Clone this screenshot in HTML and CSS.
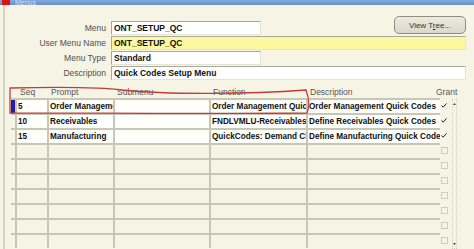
FILE: index.html
```html
<!DOCTYPE html>
<html>
<head>
<meta charset="utf-8">
<link rel="stylesheet" href="styles.css">
</head>
<body>
<div class="titlebar"><span class="ticon"></span><span class="ttext">Menus</span></div>
<div class="window">
  <div class="form">
    <div class="lbl">Menu</div>
    <div class="fld">ONT_SETUP_QC</div>
    <button class="btn">View T<u>r</u>ee...</button>
    <div class="lbl">User Menu Name</div>
    <div class="fld wide req">ONT_SETUP_QC</div>
    <div class="lbl">Menu Type</div>
    <div class="fld">Standard</div>
    <div class="lbl">Description</div>
    <div class="fld wide">Quick Codes Setup Menu</div>
  </div>

  <div class="table">
    <div class="hdr">
      <div></div>
      <div class="h seq">Seq</div>
      <div class="h">Prompt</div>
      <div class="h">Submenu</div>
      <div class="h">Function</div>
      <div class="h">Description</div>
      <div class="h grant">Grant</div>
    </div>
    <div class="body">
      <div class="rows">
        <div class="row"><div class="ind cur"></div><div class="c f">5</div><div class="c f">Order Management</div><div class="c f"></div><div class="c f">Order Management Quick Codes</div><div class="c f">Order Management Quick Codes</div><div class="g"><svg class="chk" viewBox="0 0 7 6"><path d="M0.5 3 L2.5 5 L6.5 0.5" /></svg></div></div>
        <div class="row"><div class="ind"></div><div class="c f">10</div><div class="c f">Receivables</div><div class="c f"></div><div class="c f">FNDLVMLU-Receivables</div><div class="c f">Define Receivables Quick Codes</div><div class="g"><svg class="chk" viewBox="0 0 7 6"><path d="M0.5 3 L2.5 5 L6.5 0.5" /></svg></div></div>
        <div class="row"><div class="ind"></div><div class="c f">15</div><div class="c f">Manufacturing</div><div class="c f"></div><div class="c f">QuickCodes: Demand Class</div><div class="c f">Define Manufacturing Quick Codes</div><div class="g"><svg class="chk" viewBox="0 0 7 6"><path d="M0.5 3 L2.5 5 L6.5 0.5" /></svg></div></div>
        <div class="row"><div class="ind"></div><div class="c"></div><div class="c"></div><div class="c"></div><div class="c"></div><div class="c"></div><div class="g"><span class="box"></span></div></div>
        <div class="row"><div class="ind"></div><div class="c"></div><div class="c"></div><div class="c"></div><div class="c"></div><div class="c"></div><div class="g"><span class="box"></span></div></div>
        <div class="row"><div class="ind"></div><div class="c"></div><div class="c"></div><div class="c"></div><div class="c"></div><div class="c"></div><div class="g"><span class="box"></span></div></div>
        <div class="row"><div class="ind"></div><div class="c"></div><div class="c"></div><div class="c"></div><div class="c"></div><div class="c"></div><div class="g"><span class="box"></span></div></div>
        <div class="row"><div class="ind"></div><div class="c"></div><div class="c"></div><div class="c"></div><div class="c"></div><div class="c"></div><div class="g"><span class="box"></span></div></div>
        <div class="row"><div class="ind"></div><div class="c"></div><div class="c"></div><div class="c"></div><div class="c"></div><div class="c"></div><div class="g"><span class="box"></span></div></div>
        <div class="row"><div class="ind"></div><div class="c"></div><div class="c"></div><div class="c"></div><div class="c"></div><div class="c"></div><div class="g"><span class="box"></span></div></div>
      </div>
      <div class="scroll">
        <svg class="arr" viewBox="0 0 4 3"><path d="M0 3 L2 0 L4 3 Z"/></svg>
        <svg class="arr" viewBox="0 0 4 3"><path d="M0 0 L2 3 L4 0 Z"/></svg>
      </div>
    </div>
  </div>
</div>
<svg class="note" viewBox="0 0 474 249" width="474" height="249">
  <path d="M10,88 C60,87 100,87 122,90 C170,95 250,94 306,90 C309,98 310,106 307,113 C200,114 100,113 10,113 Z" />
</svg>
</body>
</html>
```

FILE: styles.css
```css
html, body {
  margin: 0;
  padding: 0;
  overflow: hidden;
}
body {
  width: 474px;
  height: 249px;
  background: #f5f4e5;
  font-family: "Liberation Sans", Arial, sans-serif;
  position: relative;
}
.titlebar {
  height: 5px;
  background: linear-gradient(#86aadb, #6590cd);
  display: flex;
  align-items: center;
  overflow: hidden;
}
.ticon {
  width: 8px;
  height: 5px;
  margin-left: 2px;
  background: #d8140f;
}
.ttext {
  margin-left: 5px;
  font-size: 7px;
  line-height: 5px;
  color: #cfdcf0;
}
.window {
  margin-left: 3px;
  border-left: 2px solid #d6d5c4;
  height: 244px;
}
.form {
  display: grid;
  grid-template-columns: 101px 150px 1fr 72px;
  grid-auto-rows: 14px;
  column-gap: 5px;
  row-gap: 1px;
  padding: 16px 8px 0 0;
}
.lbl {
  grid-column: 1;
  text-align: right;
  font-size: 8.5px;
  line-height: 14px;
  color: #505050;
}
.fld {
  grid-column: 2;
  box-sizing: border-box;
  background: #fff;
  border-top: 1px solid #a9a898;
  border-left: 1px solid #a9a898;
  border-right: 1px solid #e4e3d4;
  border-bottom: 1px solid #e4e3d4;
  font-size: 8.5px;
  font-weight: bold;
  line-height: 12px;
  padding-left: 2px;
  color: #111;
  white-space: nowrap;
  overflow: hidden;
}
.fld.wide {
  grid-column: 2 / 5;
}
.fld.req {
  background: #fdf7a0;
}
.btn {
  grid-column: 4;
  grid-row: 1;
  align-self: start;
  margin-top: -5px;
  height: 18px;
  box-sizing: border-box;
  border: 1px solid #8e8d80;
  border-radius: 5px;
  background: linear-gradient(#ecebe0, #d9d8ca);
  font-family: "Liberation Sans", Arial, sans-serif;
  font-size: 8px;
  color: #333;
  padding: 0;
}
.table {
  margin-top: 7px;
  padding-left: 6px;
}
.hdr, .row {
  display: grid;
  grid-template-columns: 4px 32px 66px 96px 97px 134px 12px;
}
.hdr {
  height: 11px;
}
.h {
  font-size: 8.5px;
  line-height: 11px;
  color: #555;
  padding-left: 4px;
  white-space: nowrap;
}
.h.seq {
  padding-left: 5px;
}
.h.grant {
  padding-left: 0;
  margin-left: -4px;
}
.body {
  display: flex;
}
.row {
  height: 15px;
}
.ind {
  box-sizing: border-box;
  border-top: 2px solid #c8c7b6;
}
.ind.cur {
  background: #1f1fa0;
}
.c {
  box-sizing: border-box;
  border-top: 2px solid #c8c7b6;
  border-left: 2px solid #c8c7b6;
  font-size: 8.2px;
  font-weight: bold;
  line-height: 13px;
  padding-left: 1px;
  color: #111;
  white-space: nowrap;
  overflow: hidden;
}
.c.f {
  background: #fefefb;
}
.g {
  display: flex;
  align-items: center;
  padding-left: 1px;
}
.chk {
  width: 6px;
  height: 5px;
  fill: none;
  stroke: #222;
  stroke-width: 1.2;
}
.box {
  width: 5px;
  height: 5px;
  border: 1px solid #cfcebe;
}
.scroll {
  width: 5px;
  height: 150px;
  margin-top: 1px;
  border: 1px dotted #d0cfbf;
  display: flex;
  flex-direction: column;
  justify-content: space-between;
  align-items: center;
  padding: 3px 0 3px;
  box-sizing: border-box;
}
.arr {
  width: 3px;
  height: 2px;
  fill: #333;
}
.note {
  position: absolute;
  left: 0;
  top: 0;
  pointer-events: none;
}
.note path {
  fill: none;
  stroke: #c63a3a;
  stroke-width: 1.3;
}
```
